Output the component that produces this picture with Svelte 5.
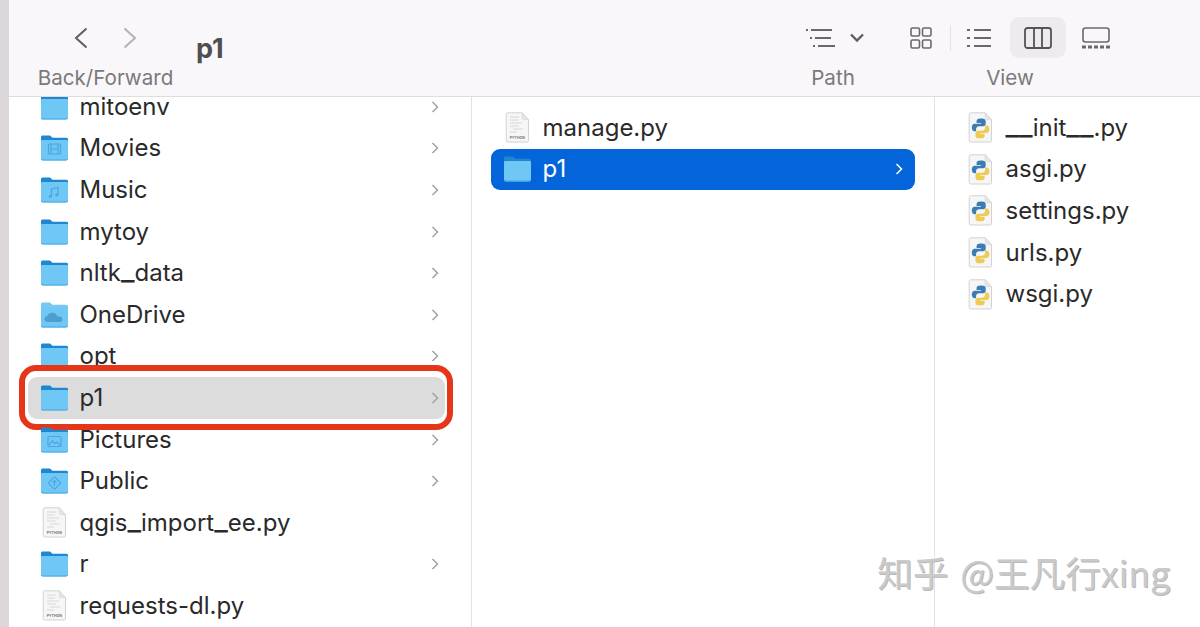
<script>
  const places = [
    { name: "mitoenv", icon: "folder", more: true },
    { name: "Movies", icon: "folder", emblem: "film", more: true },
    { name: "Music", icon: "folder", emblem: "music", more: true },
    { name: "mytoy", icon: "folder", more: true },
    { name: "nltk_data", icon: "folder", more: true },
    { name: "OneDrive", icon: "folder", emblem: "cloud", more: true },
    { name: "opt", icon: "folder", more: true },
    { name: "p1", icon: "folder", more: true, state: "inactive" },
    { name: "Pictures", icon: "folder", emblem: "picture", more: true },
    { name: "Public", icon: "folder", emblem: "public", more: true },
    { name: "qgis_import_ee.py", icon: "script" },
    { name: "r", icon: "folder", more: true },
    { name: "requests-dl.py", icon: "script" }
  ];

  const project = [
    { name: "manage.py", icon: "script" },
    { name: "p1", icon: "folder", more: true, state: "active" }
  ];

  const modules = ["__init__.py", "asgi.py", "settings.py", "urls.py", "wsgi.py"].map((name) => ({
    name,
    icon: "python"
  }));

  const snake =
    "M11.8 7.5c-2.6 0-3.3 1-3.3 2.2v1.5h3.6v.6H7c-1.5 0-2.4 1.1-2.4 3.1s.9 3.1 2.2 3.1h1.3v-1.8c0-1.4 1.1-2.4 2.5-2.4h3.4c1.1 0 2-.9 2-2V9.7c0-1.2-1-2.2-3.2-2.2z";

  // underscores are wider in the system font than in Inter
  const chunks = (name) => name.split(/(_)/).filter(Boolean);
</script>

{#snippet folder(emblem)}
  <svg class="icon" width="27" height="26" viewBox="0 0 27 26">
    <path d="M0 5V2.2C0 1 .8.4 1.8.4h6.4c.9 0 1.3.4 1.9 1l1.4 1.4h13.7c1.3 0 2.3.9 2.3 2.2V9H0z" fill={emblem === "cloud" ? "#78c8f2" : "#2086cf"} />
    <path d="M0 6.2c0-.8.6-1.2 1.4-1.2h24.2c.8 0 1.4.4 1.4 1.2v17.2c0 1.4-.8 2.2-2.2 2.2H2.2C.8 25.6 0 24.8 0 23.4z" fill="#6fc7f6" />
    <path d="M0 23v.6c0 1.3.8 2 2.2 2h22.6c1.4 0 2.2-.7 2.2-2V23c0 1-.8 1.4-2 1.4H2c-1.2 0-2-.4-2-1.4z" fill="#48a5de" />
    {#if emblem === "film"}
      <g fill="none" stroke="#4aa6df" stroke-width="1.2">
        <rect x="7.5" y="9" width="12" height="10" rx="1" />
        <path d="M10 9v10M17 9v10M10 14h7" />
      </g>
    {:else if emblem === "music"}
      <path d="M10.5 19.5v-7.5l6.5-1.5v7.5" fill="none" stroke="#4aa6df" stroke-width="1.2" />
      <circle cx="9.2" cy="19.5" r="1.4" fill="#4aa6df" />
      <circle cx="15.7" cy="18" r="1.4" fill="#4aa6df" />
    {:else if emblem === "cloud"}
      <path d="M7 20c-2.4 0-3.6-1.4-3.6-3 0-1.700 1.300-2.900 3-3 .8-2 2.600-3.200 4.800-3.200 2.600 0 4.500 1.500 5 3.600 2.700-.6 5.200.8 5.200 3 0 1.700-1.300 2.600-3 2.600z" fill="#4c9fcf" />
    {:else if emblem === "picture"}
      <g fill="none" stroke="#4aa6df" stroke-width="1.2">
        <rect x="7" y="9.500" width="13" height="10" rx="1" />
        <path d="M8 18l3.500-4 2.500 2.500 2-1.500 3 3" />
      </g>
    {:else if emblem === "public"}
      <g fill="none" stroke="#4aa6df" stroke-width="1.100">
        <rect x="9" y="10.500" width="9" height="9" rx="1" transform="rotate(45 13.500 15)" />
        <path d="M13.500 18v-5.500M11.500 14.500l2-2 2 2" />
      </g>
    {/if}
  </svg>
{/snippet}

{#snippet page(python)}
  <svg class="icon" width="27" height="31" viewBox="-2 0 27 31">
    <path d="M1.800.8h14.400l6.300 6.800v20.800c0 1-.6 1.600-1.600 1.600H1.800c-1 0-1.600-.6-1.600-1.600V2.400C.2 1.400.8.800 1.800.8z" fill="#f6f6f6" stroke="#d2d2d2" />
    <path d="M16.200.8v5.200c0 1 .6 1.600 1.600 1.600h4.700z" fill="#e6e6e6" stroke="#d2d2d2" stroke-width=".6" />
    {#if python}
      <g transform="translate(-2.800 -2.600) scale(1.220)">
        <path d={snake} fill="#3b7cb4" />
        <path d={snake} fill="#eecb52" transform="rotate(180 11.800 15.600)" />
      </g>
    {:else}
      <path d="M4 5h9M4 8h8M4 11h12M4 14h9M7 17h10M4 20h7" stroke="#d4d4d4" stroke-width=".9" />
      <text x="11.300" y="27" class="kind">PYTHON</text>
    {/if}
  </svg>
{/snippet}

{#snippet column(items, cls)}
  <div class={"column " + cls}>
    {#each items as item}
      <div class={"row " + (item.state || "")}>
        {#if item.icon === "folder"}
          {@render folder(item.emblem)}
        {:else}
          {@render page(item.icon === "python")}
        {/if}
        <span class="name">{#each chunks(item.name) as bit}{#if bit === "_"}<span class="under">_</span>{:else}{bit}{/if}{/each}</span>
        {#if item.more}
          <svg class="more" width="8" height="12" viewBox="0 0 8 12"><path d="M1.500 1l5 5-5 5" fill="none" stroke="currentColor" stroke-width="1.500" /></svg>
        {/if}
        {#if item.state === "inactive"}
          <div class="ring"></div>
        {/if}
      </div>
    {/each}
  </div>
{/snippet}

<div class="screen">
  <div class="strip"></div>
  <div class="finder">
    <header class="toolbar">
      <div class="group nav">
        <div class="tools">
          <svg width="14" height="22" viewBox="0 0 14 22"><path d="M12.500 1.500L2 11l10.500 9.500" fill="none" stroke="#5f5d5f" stroke-width="2" /></svg>
          <svg width="14" height="22" viewBox="0 0 14 22"><path d="M1.500 1.500L12 11 1.500 20.500" fill="none" stroke="#b4b2b4" stroke-width="2" /></svg>
        </div>
        <span class="label">Back/Forward</span>
      </div>
      <h1 class="title">p1</h1>
      <div class="group path">
        <div class="tools">
          <svg width="29" height="20" viewBox="0 0 29 20">
            <g fill="none" stroke="#6b696b" stroke-width="2">
              <path d="M0 2h2M5 2h21M4 10h2M9 10h16M7 18h2M12 18h17" />
            </g>
          </svg>
          <svg width="14" height="9" viewBox="0 0 14 9"><path d="M1 1.500l6 6 6-6" fill="none" stroke="#5f5d5f" stroke-width="2.400" /></svg>
        </div>
        <span class="label">Path</span>
      </div>
      <div class="group view">
        <div class="tools">
          <svg class="v-grid" width="22" height="22" viewBox="0 0 22 22">
            <g fill="none" stroke="#6b696b" stroke-width="1.600">
              <rect x="1" y="1" width="8.500" height="8" rx="1.500" />
              <rect x="12.500" y="1" width="8.500" height="8" rx="1.500" />
              <rect x="1" y="13" width="8.500" height="8" rx="1.500" />
              <rect x="12.500" y="13" width="8.500" height="8" rx="1.500" />
            </g>
          </svg>
          <span class="divider"></span>
          <svg class="v-list" width="24" height="20" viewBox="0 0 24 20">
            <path d="M0 2h3M7 2h17M0 10h3M7 10h17M0 18h3M7 18h17" fill="none" stroke="#6b696b" stroke-width="2" />
          </svg>
          <span class="current">
            <svg width="28" height="22" viewBox="0 0 28 22">
              <rect x="1" y="1" width="26" height="20" rx="2.500" fill="none" stroke="#555355" stroke-width="1.800" />
              <path d="M10 1v20M18 1v20" stroke="#555355" stroke-width="1.800" />
            </svg>
          </span>
          <svg class="v-gallery" width="28" height="22" viewBox="0 0 28 22">
            <rect x="1" y="1" width="26" height="14" rx="2.500" fill="none" stroke="#6b696b" stroke-width="1.600" />
            <path d="M0 20h28" stroke="#6b696b" stroke-width="3" stroke-dasharray="4 2" />
          </svg>
        </div>
        <span class="label">View</span>
      </div>
    </header>

    <main class="columns">
      {@render column(places, "places")}
      {@render column(project, "project")}
      {@render column(modules, "modules")}
    </main>
  </div>
  <div class="watermark">知乎 @王凡行xing</div>
</div>

<style>
  :global(body) {
    background: #fff;
  }

  .screen {
    position: relative;
    display: flex;
    width: 1200px;
    height: 627px;
    overflow: hidden;
    font-family: Inter, "Liberation Sans", sans-serif;
    color: #2a2a2a;
  }

  .strip {
    width: 9px;
    flex: none;
    background: #dbd7db;
  }

  .finder {
    flex: 1;
    min-width: 0;
    display: flex;
    flex-direction: column;
    background: #fff;
  }

  .toolbar {
    position: relative;
    z-index: 2;
    flex: none;
    display: flex;
    padding: 17px 90px 0 29px;
    height: 79px;
    background: #faf7fa;
    border-bottom: 1px solid #e0dde0;
  }

  .group {
    display: flex;
    flex-direction: column;
    align-items: center;
  }

  .tools {
    display: flex;
    align-items: center;
    height: 41px;
  }

  .label {
    margin-top: 7px;
    font-size: 20.600px;
    line-height: 26px;
    color: #7b797b;
    white-space: nowrap;
  }

  .nav {
    width: 135px;
  }

  .nav .tools {
    gap: 35px;
  }

  .title {
    margin: 17px 0 0 23px;
    font-size: 27px;
    line-height: 30px;
    font-weight: 700;
    color: #504e50;
  }

  .path {
    margin-left: auto;
    width: 58px;
  }

  .path .tools {
    gap: 15px;
  }

  .path .label {
    margin-right: 4px;
  }

  .view {
    margin-left: 46px;
    width: 200px;
  }

  .divider {
    width: 1px;
    height: 26px;
    margin: 0 16px 0 18px;
    background: #e4e1e4;
  }

  .current {
    display: flex;
    align-items: center;
    justify-content: center;
    width: 56px;
    height: 41px;
    margin: 0 16px 0 19px;
    border-radius: 9px;
    background: #eeebee;
  }

  .columns {
    flex: 1;
    min-height: 0;
    display: flex;
  }

  .column {
    height: 100%;
    box-sizing: border-box;
    padding: 10px 19px 0;
  }

  .places {
    width: 463px;
    padding: 0 26px 0 19px;
    border-right: 1px solid #e3e1e3;
  }

  .places .row:first-child {
    margin-top: -11px;
  }

  .project {
    width: 463px;
    border-right: 1px solid #e3e1e3;
  }

  .project .row {
    padding-right: 12px;
  }

  .modules {
    flex: 1;
  }

  .row {
    position: relative;
    display: flex;
    align-items: center;
    gap: 11.500px;
    height: 41.6px;
    padding: 0 6px 0 13px;
    border-radius: 9px;
    box-sizing: border-box;
    font-size: 24px;
    white-space: nowrap;
    color: #2a2a2a;
  }

  .name {
    line-height: 30px;
  }

  .row.inactive {
    background: #dcdcdc;
  }

  .row.active {
    background: #0464d9;
    color: #fff;
  }

  .icon {
    flex: none;
  }

  .under {
    font-size: 1.240em;
    line-height: 0;
    vertical-align: 1px;
  }

  .kind {
    font-size: 3.500px;
    font-weight: 700;
    text-anchor: middle;
    fill: #777;
  }

  .more {
    margin-left: auto;
    color: #a3a1a3;
  }

  .row.active .more {
    color: #fff;
  }

  .ring {
    position: absolute;
    top: -12px;
    right: -8px;
    bottom: -11px;
    left: -9px;
    border: 6px solid #e6361a;
    border-radius: 17px;
    pointer-events: none;
  }

  .watermark {
    position: absolute;
    right: 30px;
    bottom: 33px;
    font-family: "Noto Sans CJK SC", sans-serif;
    font-size: 35.600px;
    line-height: 44px;
    word-spacing: 4px;
    color: #cacaca;
    text-shadow: 1px 1px 0 #b8b8b8, -1px -1px 0 rgba(255, 255, 255, 0.8);
    white-space: nowrap;
  }
</style>
